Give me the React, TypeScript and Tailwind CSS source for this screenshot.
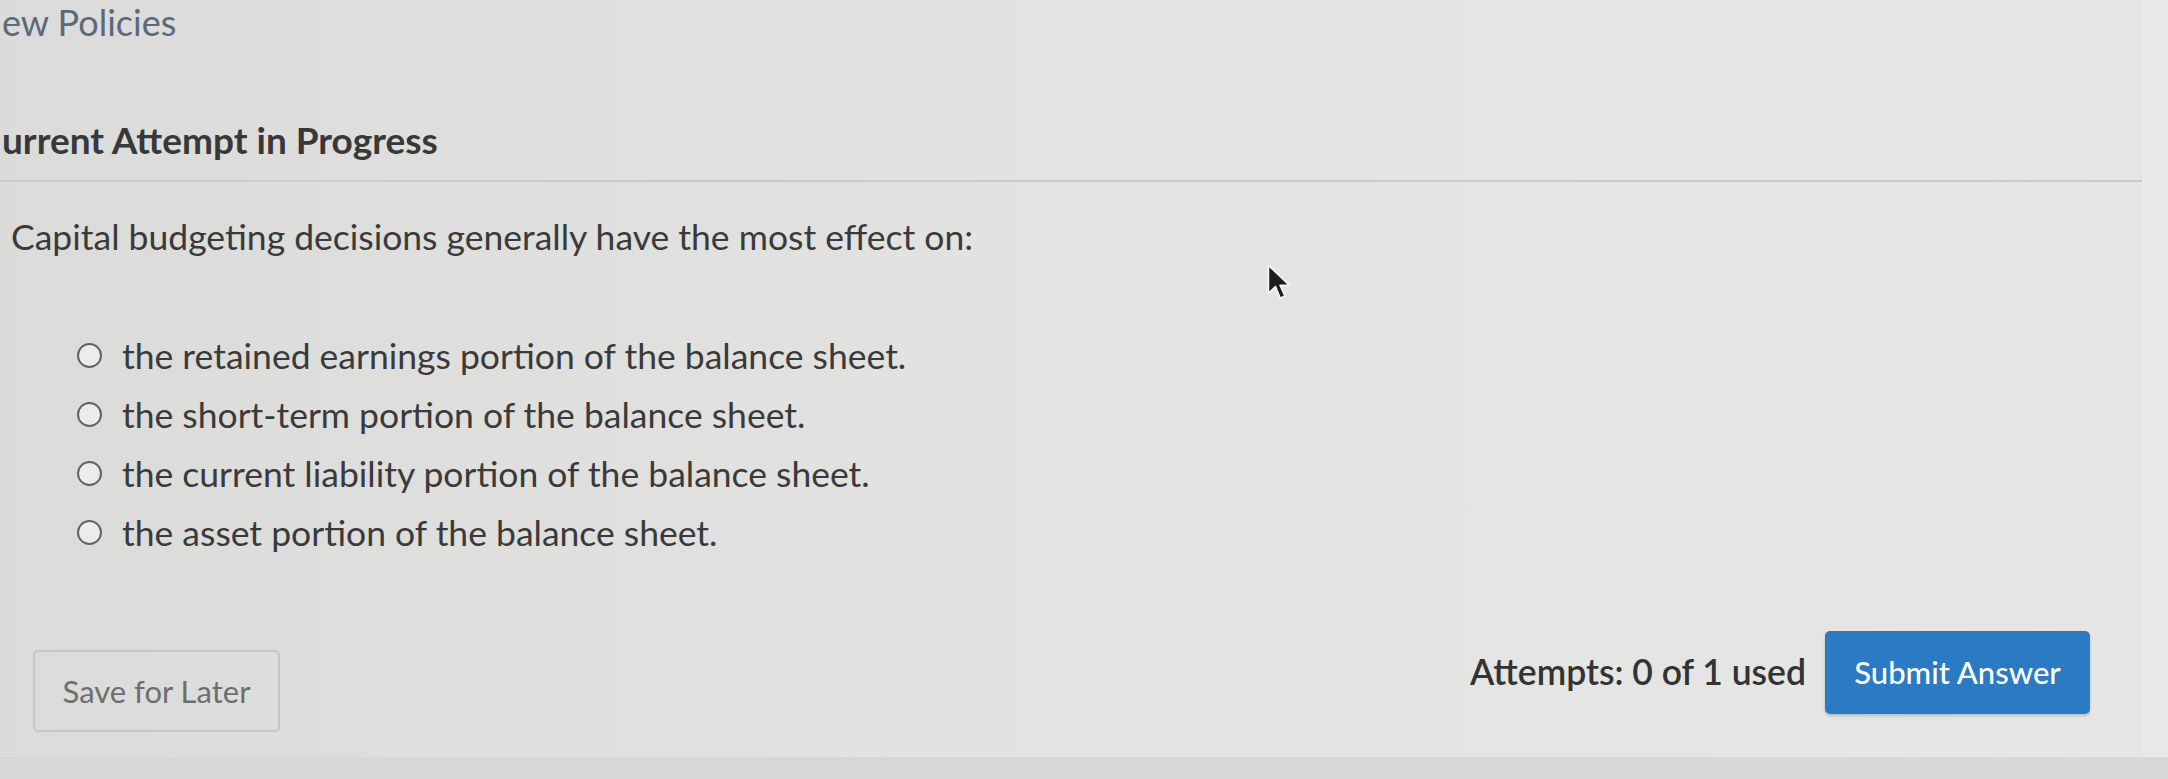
import React from "react"

const options = [
  "the retained earnings portion of the balance sheet.",
  "the short-term portion of the balance sheet.",
  "the current liability portion of the balance sheet.",
  "the asset portion of the balance sheet.",
]

function Cursor() {
  return (
    <svg className="absolute left-[1266px] top-[262px]" width="26" height="42" viewBox="0 0 22 34">
      <path
        d="M2 2 L2 26 L8 20 L12 30 L16 28 L12 19 L20 19 Z"
        fill="#1c1c1c"
        stroke="#f4f4f4"
        strokeWidth="1.5"
        strokeLinejoin="round"
      />
    </svg>
  )
}

export default function App() {
  return (
    <div className="relative w-[2168px] h-[779px] overflow-hidden bg-[#e2e2e0] font-['Lato',sans-serif]">
      <div className="flex h-[757px]">
        <main className="w-[2142px] flex flex-col bg-gradient-to-r from-[#dbdbd9] via-[#e3e3e1] to-[#e6e6e4]">
          <div className="h-[44px] pl-[2px] text-[36px] leading-[44px] text-[#5a6a7b] whitespace-nowrap">ew Policies</div>

          <h2 className="mt-[76px] h-[40px] pl-[2px] text-[37px] leading-[40px] font-bold text-[#383838] whitespace-nowrap">
            urrent Attempt in Progress
          </h2>

          <div className="mt-[20px] border-t-2 border-[#cacac8]" />

          <p className="mt-[35px] pl-[11px] text-[35.5px] leading-[40px] text-[#3a3a3a] whitespace-nowrap">
            Capital budgeting decisions generally have the most effect on:
          </p>

          <ul className="mt-[69px] pl-[77px] flex flex-col">
            {options.map((o) => (
              <li key={o} className="h-[59px] flex items-center gap-[20px]">
                <span className="w-[25px] h-[25px] rounded-full border-2 border-[#626262] bg-[#ececea]" />
                <span className="text-[35.5px] leading-[40px] text-[#3a3a3a] whitespace-nowrap">{o}</span>
              </li>
            ))}
          </ul>

          <div className="mt-[69px] flex items-start justify-between pl-[33px] pr-[52px]">
            <button className="mt-[19px] w-[247px] h-[82px] rounded-[5px] border-2 border-[#c6c6c4] text-[31px] text-[#6e6e6e]">
              Save for Later
            </button>

            <div className="flex items-start gap-[19px]">
              <span className="mt-[21px] text-[35.5px] leading-[40px] font-semibold text-[#333333] whitespace-nowrap">
                Attempts: 0 of 1 used
              </span>
              <button className="w-[265px] h-[83px] rounded-[5px] bg-[#2a7bc3] text-[31px] font-medium text-white shadow-[0_2px_3px_rgba(0,0,0,0.18)]">
                Submit Answer
              </button>
            </div>
          </div>
        </main>
        <div className="flex-1 bg-[#e9e9e7]" />
      </div>
      <div className="h-[22px] bg-[#d7d7d5]" />
      <Cursor />
    </div>
  )
}
